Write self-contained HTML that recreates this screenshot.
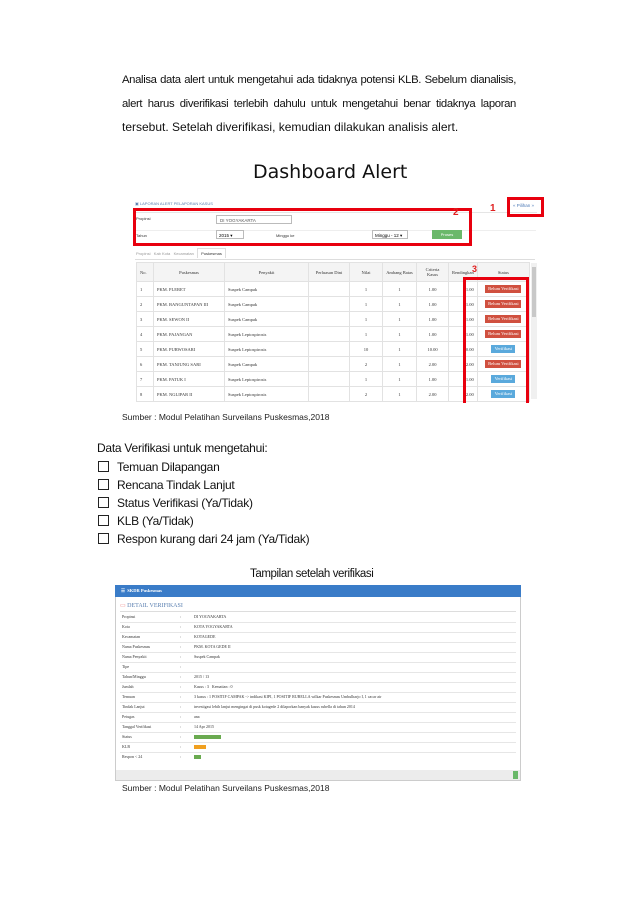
<!DOCTYPE html><html><head><meta charset="utf-8"><style>
body{margin:0;width:638px;height:902px;background:#fff;position:relative;font-family:"Liberation Sans",sans-serif;overflow:hidden}
.a{position:absolute}
.t{position:absolute;left:122px;width:394px;margin:0;font-size:11.3px;letter-spacing:-0.35px;color:#111;text-align:justify;text-align-last:justify;line-height:16px}
.li{position:absolute;left:98px;font-family:"Liberation Sans",sans-serif;font-size:12px;letter-spacing:-0.25px;color:#111}
.li span{display:inline-block;width:9px;height:9px;border:1px solid #222;margin-right:8px;vertical-align:-1px}
table{border-collapse:collapse;font-family:"Liberation Serif",serif;font-size:4.5px;color:#333}
td{border:1px solid #e2e2e2;padding:0 3px;height:14px}
.rb{background:#d0503f;color:#fff;display:inline-block;width:36px;height:8px;text-align:center;line-height:8px}
.bb{background:#5aa9dc;color:#fff;display:inline-block;width:24px;height:8px;text-align:center;line-height:8px}
.red{position:absolute;border:3px solid #e8000e}
.dr{position:absolute;left:120px;width:396px;height:10px;border-bottom:1px solid #e6e6e6;font-family:"Liberation Serif",serif;font-size:4px;color:#333;line-height:10px}
.dr b{font-weight:normal;position:absolute;left:2px}.dr i{font-style:normal;position:absolute;left:60px}.dr u{text-decoration:none;position:absolute;left:74px}
.sm{position:absolute;left:122px;font-size:8.5px;color:#222}
</style></head><body>
<div class="t" style="top:72px">Analisa data alert untuk mengetahui ada tidaknya potensi KLB. Sebelum dianalisis,</div>
<div class="t" style="top:96px">alert harus diverifikasi terlebih dahulu untuk mengetahui benar tidaknya laporan</div>
<div class="t" style="top:119px;text-align-last:left;font-size:12px;letter-spacing:0">tersebut. Setelah diverifikasi, kemudian dilakukan analisis alert.</div>
<div class="a" style="left:253px;top:161px;font-family:'DejaVu Sans',sans-serif;font-size:19px;color:#111">Dashboard Alert</div>
<div class="a" style="left:135px;top:201px;font-size:4px;color:#5a7fb0">▣ LAPORAN ALERT PELAPORAN KASUS</div>
<div class="a" style="left:135px;top:212px;width:402px;height:1px;background:#e5e5e5"></div>
<div class="a" style="left:136px;top:216px;font-size:4px;color:#333">Propinsi</div>
<div class="a" style="left:216px;top:215px;width:76px;height:9px;border:1px solid #bbb;font-size:4.5px;color:#555;line-height:9px;padding-left:3px;box-sizing:border-box">DI YOGYAKARTA</div>
<div class="a" style="left:136px;top:230px;width:400px;height:1px;background:#eee"></div>
<div class="a" style="left:136px;top:233px;font-size:4px;color:#333">Tahun</div>
<div class="a" style="left:216px;top:230px;width:28px;height:9px;border:1px solid #bbb;font-size:4.5px;line-height:9px;padding-left:2px;box-sizing:border-box">2015 ▾</div>
<div class="a" style="left:276px;top:233px;font-size:4px;color:#333">Minggu ke</div>
<div class="a" style="left:372px;top:230px;width:36px;height:9px;border:1px solid #bbb;font-size:4.5px;line-height:9px;padding-left:2px;box-sizing:border-box">Minggu - 12 ▾</div>
<div class="a" style="left:432px;top:230px;width:30px;height:9px;background:#6ab86a;color:#fff;font-size:4px;line-height:9px;text-align:center">Proses</div>
<div class="a" style="left:136px;top:249px;width:120px;height:10px;font-size:4px;color:#999;line-height:10px">Propinsi &nbsp; Kab Kota &nbsp; Kecamatan &nbsp; <span style="border:1px solid #ddd;border-bottom:none;padding:2px 3px;color:#333">Puskesmas</span></div>
<div class="a" style="left:135px;top:259px;width:400px;height:1px;background:#ddd"></div>
<table class="a" style="left:136px;top:262px;width:394px">
<tr style="background:#f4f4f4;height:19px"><td style="width:10px">No.</td><td style="width:64px;text-align:center">Puskesmas</td><td style="width:77px;text-align:center">Penyakit</td><td style="width:34px;text-align:center">Perluasan Dini</td><td style="width:26px;text-align:center">Nilai</td><td style="width:27px;text-align:center">Ambang Batas</td><td style="width:25px;text-align:center">Criteria Kasus</td><td style="width:18px">Rendingkan</td><td style="text-align:center">Status</td></tr>
<tr><td>1</td><td>PKM. PLERET</td><td>Suspek Campak</td><td></td><td align=center>1</td><td align=center>1</td><td align=center>1.00</td><td align=right>1.00</td><td align=center><span class="rb">Belum Verifikasi</span></td></tr>
<tr><td>2</td><td>PKM. BANGUNTAPAN III</td><td>Suspek Campak</td><td></td><td align=center>1</td><td align=center>1</td><td align=center>1.00</td><td align=right>1.00</td><td align=center><span class="rb">Belum Verifikasi</span></td></tr>
<tr><td>3</td><td>PKM. SEWON II</td><td>Suspek Campak</td><td></td><td align=center>1</td><td align=center>1</td><td align=center>1.00</td><td align=right>1.00</td><td align=center><span class="rb">Belum Verifikasi</span></td></tr>
<tr><td>4</td><td>PKM. PAJANGAN</td><td>Suspek Leptospirosis</td><td></td><td align=center>1</td><td align=center>1</td><td align=center>1.00</td><td align=right>1.00</td><td align=center><span class="rb">Belum Verifikasi</span></td></tr>
<tr><td>5</td><td>PKM. PURWOSARI</td><td>Suspek Leptospirosis</td><td></td><td align=center>10</td><td align=center>1</td><td align=center>10.00</td><td align=right>10.00</td><td align=center><span class="bb">Verifikasi</span></td></tr>
<tr><td>6</td><td>PKM. TANJUNG SARI</td><td>Suspek Campak</td><td></td><td align=center>2</td><td align=center>1</td><td align=center>2.00</td><td align=right>2.00</td><td align=center><span class="rb">Belum Verifikasi</span></td></tr>
<tr><td>7</td><td>PKM. PATUK I</td><td>Suspek Leptospirosis</td><td></td><td align=center>1</td><td align=center>1</td><td align=center>1.00</td><td align=right>1.00</td><td align=center><span class="bb">Verifikasi</span></td></tr>
<tr><td>8</td><td>PKM. NGLIPAR II</td><td>Suspek Leptospirosis</td><td></td><td align=center>2</td><td align=center>1</td><td align=center>2.00</td><td align=right>2.00</td><td align=center><span class="bb">Verifikasi</span></td></tr>
</table>
<div class="a" style="left:531px;top:263px;width:6px;height:136px;background:#f0f0f0"><div style="margin:4px 1px;height:50px;background:#c8c8c8"></div></div>
<div class="a" style="left:513px;top:203px;font-size:4.5px;color:#4a78b5">« Pilihan »</div>
<div class="red" style="left:507px;top:197px;width:31px;height:14px"></div>
<div class="a" style="left:490px;top:203px;font-size:10px;font-weight:bold;color:#e02020">1</div>
<div class="red" style="left:133px;top:208px;width:333px;height:32px"></div>
<div class="a" style="left:453px;top:207px;font-size:10px;font-weight:bold;color:#e02020">2</div>
<div class="red" style="left:463px;top:277px;width:60px;height:123px;border-bottom:none"></div>
<div class="a" style="left:472px;top:264px;font-size:9px;font-weight:bold;color:#e02020">3</div>
<div class="sm" style="top:412px">Sumber : Modul Pelatihan Surveilans Puskesmas,2018</div>
<div class="a" style="left:97px;top:441px;font-size:12px;letter-spacing:-0.25px;color:#111">Data Verifikasi untuk mengetahui:</div>
<div class="li" style="top:460px"><span></span>Temuan Dilapangan</div>
<div class="li" style="top:478px"><span></span>Rencana Tindak Lanjut</div>
<div class="li" style="top:496px"><span></span>Status Verifikasi (Ya/Tidak)</div>
<div class="li" style="top:514px"><span></span>KLB (Ya/Tidak)</div>
<div class="li" style="top:532px"><span></span>Respon kurang dari 24 jam (Ya/Tidak)</div>
<div class="a" style="left:250px;top:568px;font-size:11.5px;letter-spacing:-0.4px;color:#111">Tampilan setelah verifikasi</div>
<div class="a" style="left:115px;top:585px;width:406px;height:196px;border:1px solid #ccc;box-sizing:border-box"></div>
<div class="a" style="left:115px;top:585px;width:406px;height:12px;background:#3a7cc8;color:#fff;font-family:'Liberation Serif',serif;font-size:4.5px;font-weight:bold;line-height:12px;padding-left:6px;box-sizing:border-box">☰ &nbsp;SKDR Puskesmas</div>
<div class="a" style="left:120px;top:602px;font-family:'Liberation Serif',serif;font-size:6px;color:#5a7fb0"><span style="color:#e88">▭</span> DETAIL VERIFIKASI</div>
<div class="a" style="left:120px;top:611px;width:396px;height:1px;background:#ddd"></div>
<div class="dr" style="top:612px"><b>Propinsi</b><i>:</i><u>DI YOGYAKARTA</u></div>
<div class="dr" style="top:622px"><b>Kota</b><i>:</i><u>KOTA YOGYAKARTA</u></div>
<div class="dr" style="top:632px"><b>Kecamatan</b><i>:</i><u>KOTAGEDE</u></div>
<div class="dr" style="top:642px"><b>Nama Puskesmas</b><i>:</i><u>PKM. KOTA GEDE II</u></div>
<div class="dr" style="top:652px"><b>Nama Penyakit</b><i>:</i><u>Suspek Campak</u></div>
<div class="dr" style="top:662px"><b>Tipe</b><i>:</i></div>
<div class="dr" style="top:672px"><b>Tahun/Minggu</b><i>:</i><u>2015 / 13</u></div>
<div class="dr" style="top:682px"><b>Jumlah</b><i>:</i><u>Kasus : 3 &nbsp; Kematian : 0</u></div>
<div class="dr" style="top:692px"><b>Temuan</b><i>:</i><u>3 kasus : 1 POSITIF CAMPAK -> indikasi KIPI, 1 POSITIF RUBELLA wilkar Puskesmas Umbulharjo I, 1 cacar air</u></div>
<div class="dr" style="top:702px"><b>Tindak Lanjut</b><i>:</i><u>investigasi lebih lanjut mengingat di pusk kotagede 2 dilaporkan banyak kasus rubella di tahun 2014</u></div>
<div class="dr" style="top:712px"><b>Petugas</b><i>:</i><u>ana</u></div>
<div class="dr" style="top:722px"><b>Tanggal Verifikasi</b><i>:</i><u>14 Apr 2015</u></div>
<div class="dr" style="top:732px"><b>Status</b><i>:</i><u style="top:3px;width:27px;height:4px;background:#6aaa50"></u></div>
<div class="dr" style="top:742px"><b>KLB</b><i>:</i><u style="top:3px;width:12px;height:4px;background:#f0a020"></u></div>
<div class="dr" style="top:752px;border:none"><b>Respon &lt; 24</b><i>:</i><u style="top:3px;width:7px;height:4px;background:#6aaa50"></u></div>
<div class="a" style="left:116px;top:770px;width:404px;height:10px;background:#ececec"><div style="position:absolute;right:2px;top:1px;width:5px;height:8px;background:#6ab86a"></div></div>
<div class="sm" style="top:783px">Sumber : Modul Pelatihan Surveilans Puskesmas,2018</div>
</body></html>
